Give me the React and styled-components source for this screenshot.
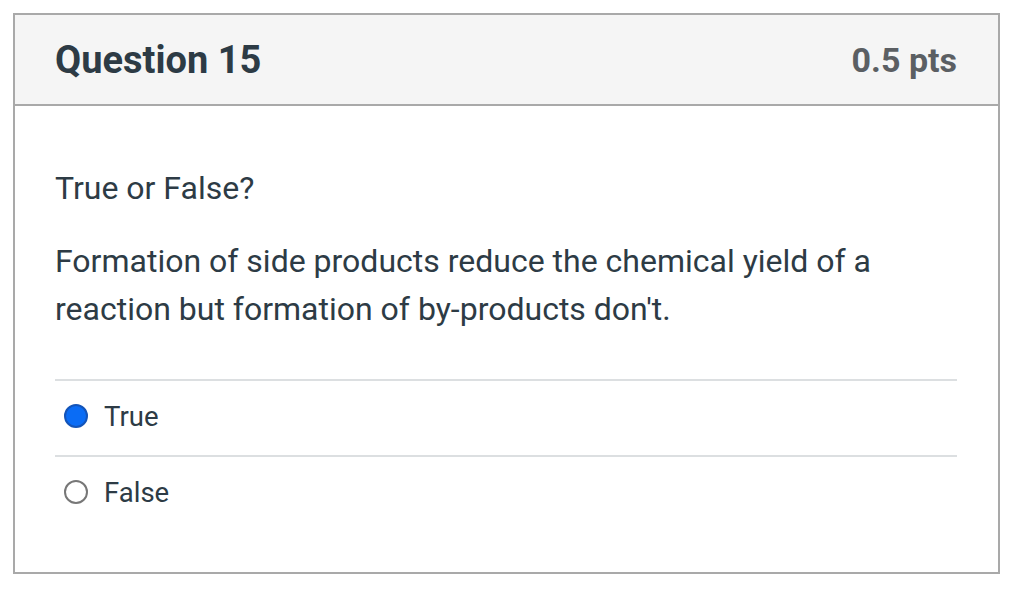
import React from 'react';
import styled, { createGlobalStyle } from 'styled-components';

const GlobalStyle = createGlobalStyle`
  body {
    margin: 0;
    background: #ffffff;
    font-family: Roboto, "Liberation Sans", sans-serif;
    color: #2d3b45;
  }
`

const Page = styled.div`
  width: 1020px;
  height: 590px;
  padding: 13px 0 0 13px;
  box-sizing: border-box;
`

const Card = styled.div`
  width: 987px;
  height: 561px;
  box-sizing: border-box;
  border: 2px solid #a9a9a9;
  display: flex;
  flex-direction: column;
`

const Header = styled.div`
  height: 91px;
  box-sizing: border-box;
  background: #f5f5f5;
  border-bottom: 2px solid #a9a9a9;
  display: flex;
  align-items: center;
  justify-content: space-between;
  padding: 0 41px 0 40px;
`

const Title = styled.h2`
  margin: 0;
  font-size: 38px;
  font-weight: 700;
  color: #2d3b45;
`

const Points = styled.div`
  font-size: 34px;
  font-weight: 700;
  color: #5b5f63;
`

const Body = styled.div`
  padding: 58px 41px 0 40px;
`

const Text = styled.p`
  margin: 0 0 25px;
  font-size: 32px;
  line-height: 48px;
  color: #2d3b45;
`

const Answers = styled.div`
  margin-top: 46px;
`

const Answer = styled.label`
  display: flex;
  align-items: center;
  height: 76px;
  border-top: 2px solid #dcdfe1;
  box-sizing: border-box;
  padding: 0 0 4px 9px;
  font-size: 27.5px;
  color: #2d3b45;
`

const Radio = styled.span`
  width: 24px;
  height: 24px;
  border-radius: 50%;
  box-sizing: border-box;
  margin-right: 16px;
  border: ${p => (p.checked ? '2px solid #1454b8' : '2px solid #777')};
  background: ${p => (p.checked ? '#0a6cf5' : '#fff')};
`

export default function App() {
  return (
    <>
      <GlobalStyle />
      <Page>
        <Card>
          <Header>
            <Title>Question 15</Title>
            <Points>0.5 pts</Points>
          </Header>
          <Body>
            <Text>True or False?</Text>
            <Text>
              Formation of side products reduce the chemical yield of a reaction but formation of by-products don't.
            </Text>
            <Answers>
              <Answer>
                <Radio checked />
                True
              </Answer>
              <Answer>
                <Radio />
                False
              </Answer>
            </Answers>
          </Body>
        </Card>
      </Page>
    </>
  );
}
